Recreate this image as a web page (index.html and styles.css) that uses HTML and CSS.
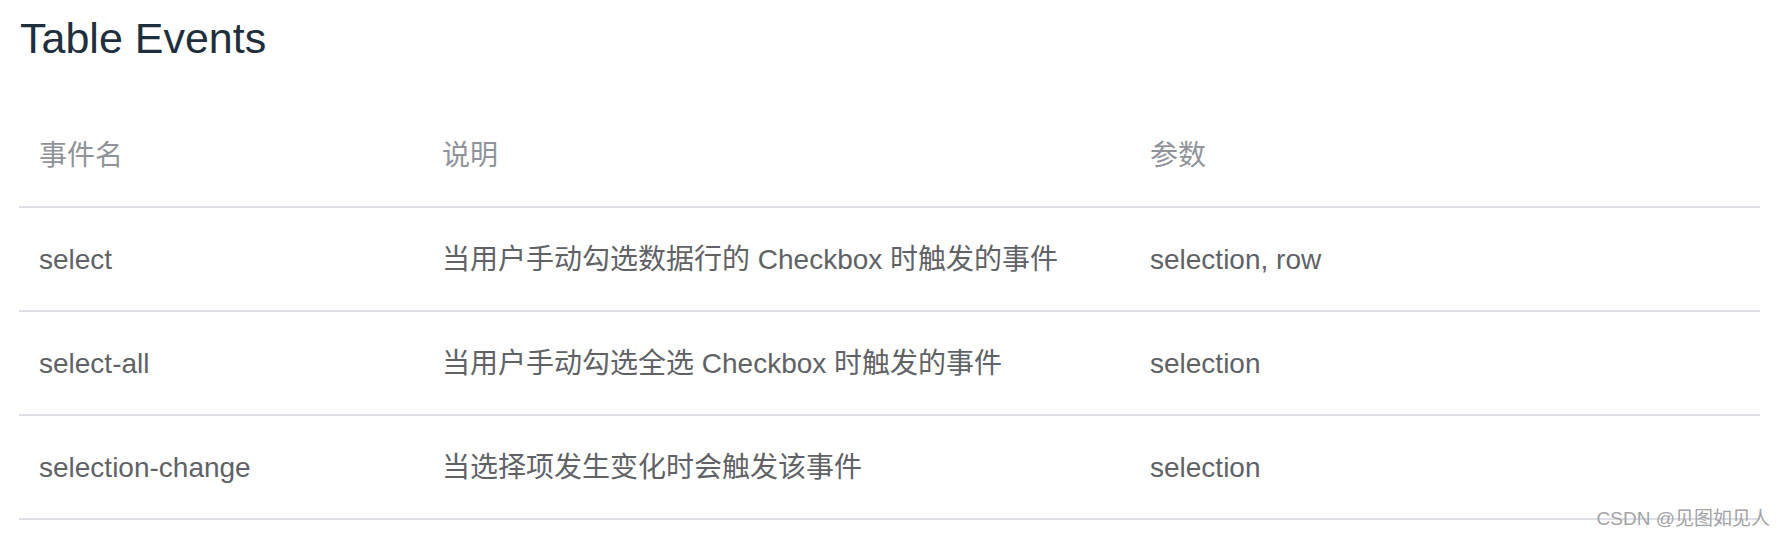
FILE: index.html
```html
<!DOCTYPE html>
<html lang="zh-CN">
<head>
    <meta charset="UTF-8">
    <title>Table Events</title>
    <link rel="stylesheet" href="styles.css">
</head>
<body>
    <div class="page">
        <h3 class="title">Table Events</h3>

        <!-- 事件表 -->
        <table class="events">
            <colgroup>
                <col class="col-name">
                <col class="col-desc">
                <col>
            </colgroup>
            <thead>
                <tr>
                    <th>事件名</th>
                    <th>说明</th>
                    <th>参数</th>
                </tr>
            </thead>
            <tbody>
                <tr>
                    <td>select</td>
                    <td>当用户手动勾选数据行的 Checkbox 时触发的事件</td>
                    <td>selection, row</td>
                </tr>
                <tr>
                    <td>select-all</td>
                    <td>当用户手动勾选全选 Checkbox 时触发的事件</td>
                    <td>selection</td>
                </tr>
                <tr>
                    <td>selection-change</td>
                    <td>当选择项发生变化时会触发该事件</td>
                    <td>selection</td>
                </tr>
            </tbody>
        </table>
    </div>

    <div class="watermark">CSDN @见图如见人</div>
</body>
</html>
```

FILE: styles.css
```css
body {
    margin: 0;
    padding: 0;
    background-color: #ffffff;
    font-family: "Liberation Sans", Arial, "Noto Sans CJK SC", sans-serif;
    overflow: hidden;
}

.page {
    padding: 0 26px 0 19px;
}

.title {
    margin: 8px 0 38px 1px;
    font-size: 43px;
    line-height: 60px;
    font-weight: normal;
    color: #1f2f3d;
}

.events {
    width: 100%;
    border-collapse: collapse;
    table-layout: fixed;
    font-size: 28px;
}

.col-name {
    width: 403px;
}

.col-desc {
    width: 708px;
}

.events th,
.events td {
    text-align: left;
    padding: 31px 20px 29px;
    line-height: 42px;
    border-bottom: 2px solid #dcdfe6;
    white-space: nowrap;
}

.events th {
    font-weight: normal;
    color: #909399;
    padding-top: 29px;
    padding-bottom: 29px;
}

.events td {
    color: #606266;
}

/* 水印 */
.watermark {
    position: absolute;
    right: 16px;
    top: 506px;
    font-size: 19px;
    line-height: 26px;
    color: #a3a3a6;
}
```
